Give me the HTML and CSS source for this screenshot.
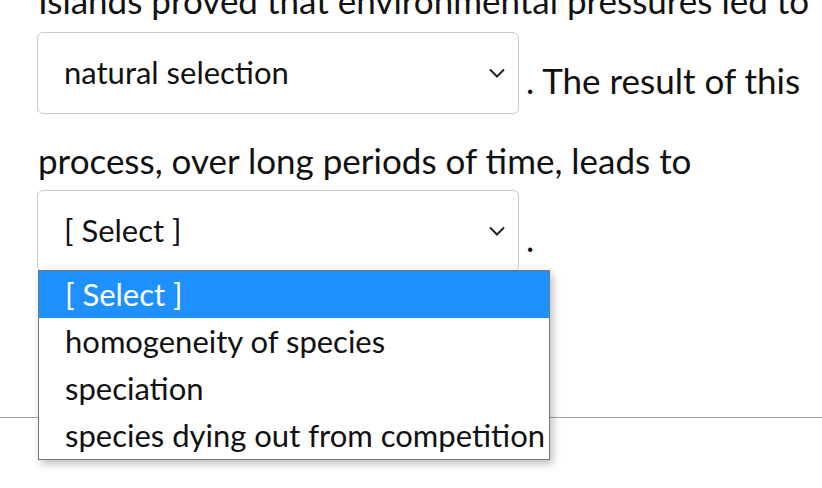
FILE: index.html
```html
<!DOCTYPE html>
<html lang="en">
<head>
    <meta charset="UTF-8">
    <title>Quiz question</title>
    <link rel="stylesheet" href="styles.css">
</head>
<body>
    <div class="question">
        <p class="question-text">
            Islands proved that environmental pressures led to
            <span class="dropdown">
                <span class="dropdown-value">natural selection</span>
                <svg class="chevron" viewBox="0 0 18 10" width="18" height="10"><path d="M2 1.5 L9 8.5 L16 1.5" fill="none" stroke="#222" stroke-width="2"/></svg>
            </span>. The result of this process, over long periods of time, leads to
            <span class="dropdown is-open">
                <span class="dropdown-value">[ Select ]</span>
                <svg class="chevron" viewBox="0 0 18 10" width="18" height="10"><path d="M2 1.5 L9 8.5 L16 1.5" fill="none" stroke="#222" stroke-width="2"/></svg>
                <!-- open option list -->
                <span class="options">
                    <span class="option selected">[ Select ]</span>
                    <span class="option">homogeneity of species</span>
                    <span class="option">speciation</span>
                    <span class="option">species dying out from competition</span>
                </span>
            </span>.
        </p>
    </div>
    <div class="divider"></div>
</body>
</html>
```

FILE: styles.css
```css
*{
    margin: 0;
    padding: 0;
    box-sizing: border-box;
}
html, body{
    height: 100%;
}
body{
    font-family: Lato, "Open Sans", sans-serif;
    color: #111;
    background: #fff;
}
.question{
    padding: 0 6px 0 38px;
}
.question-text{
    margin-top: -24px;
    font-size: 35px;
    line-height: 48px;
}
.dropdown{
    position: relative;
    display: inline-flex;
    align-items: center;
    width: 482px;
    height: 82px;
    margin: 8px 7px 22px -1px;
    padding: 0 12px 2px 26px;
    border: 1px solid #c9c9c9;
    border-radius: 6px;
    background: #fff;
    vertical-align: 10px;
}
.dropdown.is-open{
    margin-top: 6px;
}
.dropdown-value{
    flex: 1;
    font-size: 31px;
    line-height: 37px;
}
.chevron{
    flex: none;
    margin-top: 2px;
}
.options{
    position: absolute;
    top: 79px;
    left: 0;
    display: flex;
    flex-direction: column;
    border: 1px solid #767676;
    background: #fff;
    box-shadow: 3px 4px 8px rgba(0,0,0,0.25);
    z-index: 2;
}
.option{
    display: block;
    height: 47px;
    padding: 0 4px 0 26px;
    font-size: 31px;
    line-height: 47px;
    white-space: nowrap;
    color: #111;
}
.option.selected{
    background: #1e90ff;
    color: #fff;
}
.divider{
    margin-top: 123px;
    border-top: 1px solid #a3a3a3;
}
```
